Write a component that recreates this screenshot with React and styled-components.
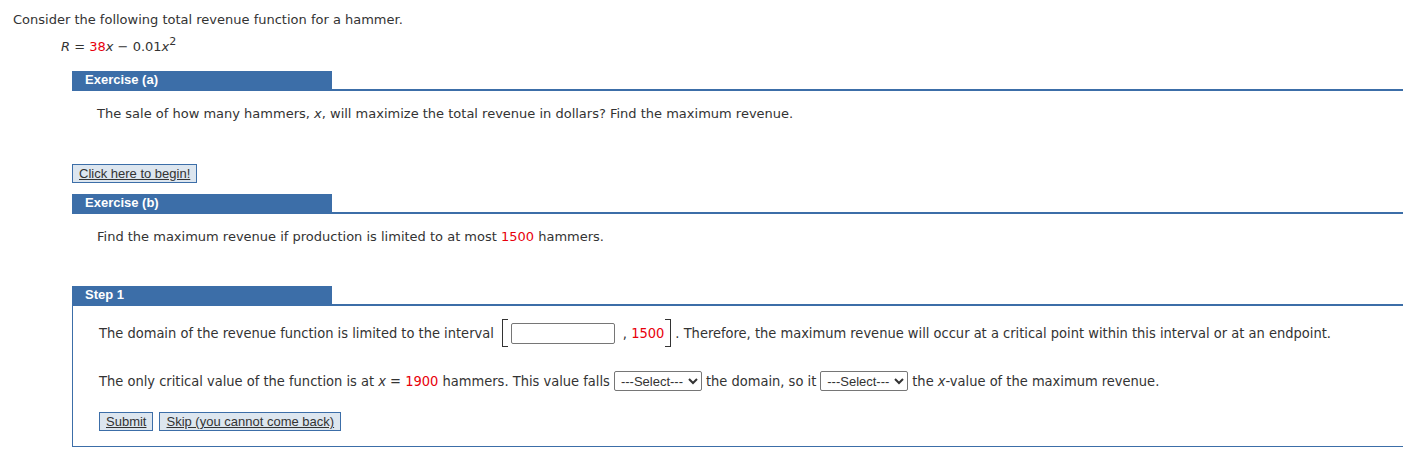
import React from 'react'
import styled, { createGlobalStyle } from 'styled-components'

const GlobalStyle = createGlobalStyle`
	html, body {
		margin: 0;
		padding: 0;
		background: #ffffff;
		overflow: hidden;
	}
	body {
		font-family: 'DejaVu Sans', Verdana, sans-serif;
		color: #333333;
	}
`

const Page = styled.div`
	width: 1403px;
	height: 457px;
	padding: 12px 0 0 13px;
	box-sizing: border-box;
`

const Intro = styled.div`
	font-size: 13px;
	line-height: 16px;
`

const Equation = styled.div`
	font-size: 13px;
	line-height: 16px;
	margin: 11px 0 0 48px;

	sup {
		font-size: 11px;
		line-height: 0;
		vertical-align: 6px;
	}
`

const Red = styled.span`
	color: #e8000b;
`

const Var = styled.i`
	font-style: italic;
`

const Section = styled.div`
	margin-left: 59px;
	margin-top: ${(p) => p.top || 0}px;
`

const HeaderRow = styled.div`
	display: flex;
	border-bottom: 2px solid #3c6ea8;
`

const HeaderTab = styled.div`
	width: 260px;
	height: 18px;
	background: #3c6ea8;
	color: #ffffff;
	font-family: 'Liberation Sans', Arial, sans-serif;
	font-weight: bold;
	font-size: 13px;
	line-height: 18px;
	padding-left: 13px;
	box-sizing: border-box;
`

const Prompt = styled.div`
	font-size: 13px;
	line-height: 16px;
	padding: 15px 0 0 25px;
	height: ${(p) => p.height}px;
	box-sizing: border-box;
`

const Button = styled.button`
	display: block;
	font-family: 'Liberation Sans', Arial, sans-serif;
	font-size: 13px;
	color: #333333;
	text-decoration: underline;
	background: #dde6ef;
	border: 1px solid #3c6ea8;
	height: 19px;
	padding: 0 6px;
	line-height: 15px;
	cursor: pointer;
`

const StepBox = styled.div`
	border-left: 1px solid #3c6ea8;
	border-bottom: 1px solid #3c6ea8;
	height: 141px;
	box-sizing: border-box;
	padding: 12px 0 0 26px;
	font-family: 'DejaVu Sans Condensed', Tahoma, sans-serif;
	font-size: 14.5px;
`

const Line = styled.div`
	display: flex;
	align-items: center;
	height: ${(p) => p.height}px;
	padding-top: ${(p) => p.gap || 0}px;
	box-sizing: border-box;
	white-space: nowrap;
`

const Bracket = styled.span`
	display: inline-block;
	width: 6px;
	height: 28px;
	border: 1.5px solid #333333;
	border-${(p) => (p.right ? 'left' : 'right')}: none;
	box-sizing: border-box;
	margin: ${(p) => (p.right ? '0 4px 0 1px' : '0 3px 0 8px')};
`

const Input = styled.input`
	width: 104px;
	height: 21px;
	box-sizing: border-box;
	border: 1px solid #767676;
	border-radius: 2px;
	margin-right: 8px;
`

const Select = styled.select`
	font-family: 'Liberation Sans', Arial, sans-serif;
	font-size: 13px;
	color: #333333;
	height: 20px;
	border: 1px solid #767676;
	border-radius: 2px;
	background: #ffffff;
	padding: 0 1px 0 2px;
	margin: 0 4px;
`

const ButtonRow = styled.div`
	display: flex;
	gap: 6px;
	margin-top: 16px;
`

export default function App() {
	return (
		<>
			<GlobalStyle />
			<Page>
				<Intro>Consider the following total revenue function for a hammer.</Intro>
				<Equation>
					<Var>R</Var> = <Red>38</Red>
					<Var>x</Var> − 0.01<Var>x</Var>
					<sup>2</sup>
				</Equation>

				<Section top={16}>
					<HeaderRow>
						<HeaderTab>Exercise (a)</HeaderTab>
					</HeaderRow>
					<Prompt height={73}>
						The sale of how many hammers, <Var>x</Var>, will maximize the total revenue in dollars? Find the maximum revenue.
					</Prompt>
					<Button>Click here to begin!</Button>
				</Section>

				<Section top={11}>
					<HeaderRow>
						<HeaderTab>Exercise (b)</HeaderTab>
					</HeaderRow>
					<Prompt height={72}>
						Find the maximum revenue if production is limited to at most <Red>1500</Red> hammers.
					</Prompt>
				</Section>

				<Section>
					<HeaderRow>
						<HeaderTab>Step 1</HeaderTab>
					</HeaderRow>
					<StepBox>
						<Line height={30}>
							The domain of the revenue function is limited to the interval
							<Bracket />
							<Input type="text" />
							, <Red>&nbsp;1500</Red>
							<Bracket right />
							. Therefore, the maximum revenue will occur at a critical point within this interval or at an endpoint.
						</Line>
						<Line height={48} gap={18}>
							The only critical value of the function is at&nbsp;<Var>x</Var>&nbsp;=&nbsp;<Red>1900</Red>&nbsp;hammers. This value falls
							<Select defaultValue="">
								<option value="">---Select---</option>
								<option>inside</option>
								<option>outside</option>
							</Select>
							the domain, so it
							<Select defaultValue="">
								<option value="">---Select---</option>
								<option>is</option>
								<option>is not</option>
							</Select>
							the&nbsp;<Var>x</Var>-value of the maximum revenue.
						</Line>
						<ButtonRow>
							<Button>Submit</Button>
							<Button>Skip (you cannot come back)</Button>
						</ButtonRow>
					</StepBox>
				</Section>
			</Page>
		</>
	)
}
